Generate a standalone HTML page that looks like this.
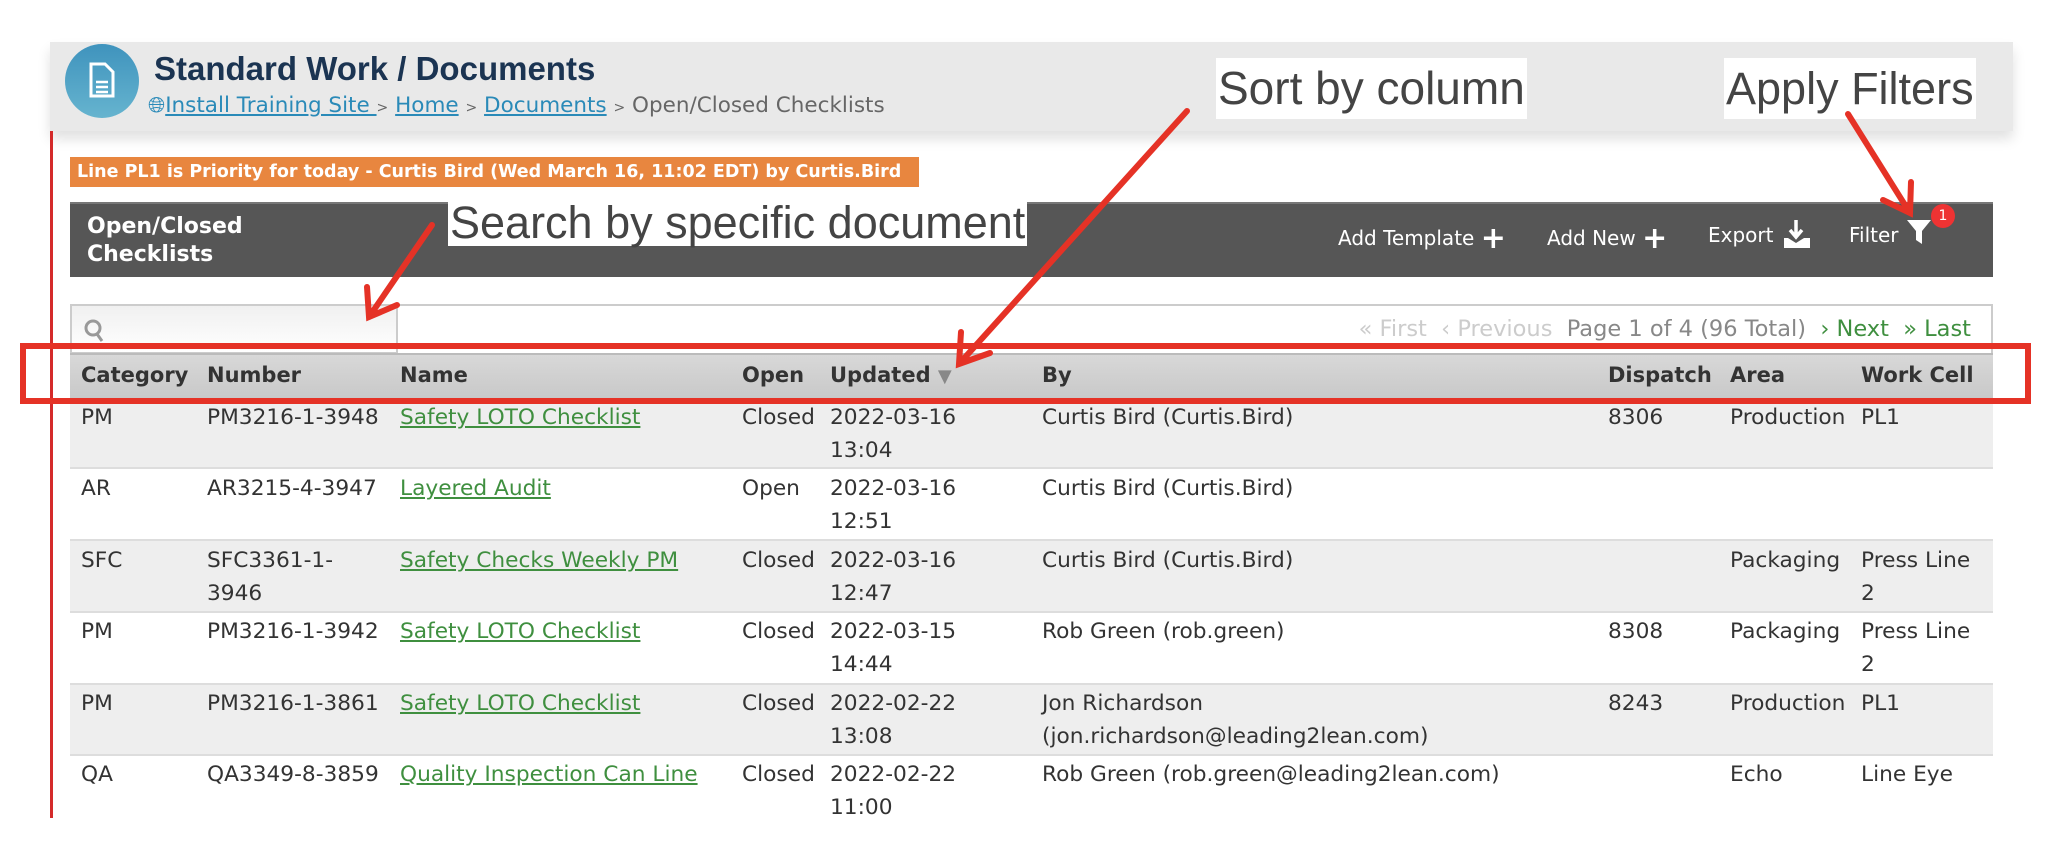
<!DOCTYPE html>
<html><head><meta charset="utf-8"><style>
*{margin:0;padding:0;box-sizing:border-box}
body{width:2052px;height:858px;background:#fff;position:relative;overflow:hidden;font-family:"DejaVu Sans","Liberation Sans",sans-serif;color:#333}
.a{position:absolute;white-space:nowrap}
.hdr{position:absolute;left:50px;top:42px;width:1963px;height:89px;background:#e9e9e9;box-shadow:0 8px 12px rgba(0,0,0,0.12)}
.row{position:absolute;left:70px;width:1923px;height:72px;border-top:2px solid #ddd}
.c{position:absolute;font-size:21.7px;line-height:33px;color:#333}
.lk{color:#3f8f3f;text-decoration:underline}
.th{position:absolute;font-size:21px;font-weight:bold;color:#333;top:363px}
.ann{position:absolute;background:#fff;color:#444;font-family:"Liberation Sans",sans-serif;font-size:46px;line-height:61px;padding:0 2px}
</style></head><body>
<div class="hdr"></div>
<div class="a" style="left:65px;top:44px;width:74px;height:74px;border-radius:50%;background:linear-gradient(#3f93bd,#66b4cf)"></div>
<svg class="a" style="left:88px;top:62px" width="28" height="36" viewBox="0 0 28 36"><path d="M3 2h14l8 8v24H3z" fill="none" stroke="#fff" stroke-width="3"/><path d="M8 20h12M8 25h12M8 30h12" stroke="#fff" stroke-width="2.5"/></svg>
<div class="a" style="left:154px;top:50px;font-size:33px;font-weight:bold;color:#1b3452;font-family:'Liberation Sans',sans-serif">Standard Work / Documents</div>
<div class="a" style="left:148px;top:93px;font-size:21.5px;color:#666">
<span style="color:#2a8ab8">&#x1F310;&#xFE0E;</span><span style="color:#2a8ab8;text-decoration:underline">Install Training Site </span> <small style="font-size:14px">&gt;</small> <span style="color:#2a8ab8;text-decoration:underline">Home</span> <small style="font-size:14px">&gt;</small> <span style="color:#2a8ab8;text-decoration:underline">Documents</span> <small style="font-size:14px">&gt;</small> Open/Closed Checklists</div>
<div class="a" style="left:50px;top:131px;width:3px;height:687px;background:#d42a2a"></div>
<div class="a" style="left:70px;top:157px;width:849px;height:30px;background:#e8863f;color:#fff;font-size:17.5px;font-weight:bold;line-height:30px;padding-left:7px">Line PL1 is Priority for today - Curtis Bird (Wed March 16, 11:02 EDT) by Curtis.Bird</div>
<div class="a" style="left:70px;top:202px;width:1923px;height:75px;background:#565656;border-top:2px solid #777"></div>
<div class="a" style="left:87px;top:213px;color:#fff;font-size:22px;font-weight:bold;line-height:28px">Open/Closed<br>Checklists</div>
<div class="a" style="left:1338px;top:221px;color:#fff;font-size:20px">Add Template <b style="font-size:30px;vertical-align:-3px">+</b></div>
<div class="a" style="left:1547px;top:221px;color:#fff;font-size:20px">Add New <b style="font-size:30px;vertical-align:-3px">+</b></div>
<div class="a" style="left:1708px;top:223px;color:#fff;font-size:20px">Export</div>
<svg class="a" style="left:1782px;top:218px" width="30" height="32" viewBox="0 0 30 32"><path d="M14 2v16M8 12l6 7 6-7" stroke="#fff" stroke-width="3.5" fill="none"/><path d="M2 20v10h26V20h-6l-8 5-8-5z" fill="#fff"/></svg>
<div class="a" style="left:1849px;top:223px;color:#fff;font-size:20px">Filter</div>
<svg class="a" style="left:1906px;top:218px" width="26" height="28" viewBox="0 0 26 28"><path d="M1 2h24l-9 11v13l-6-4v-9z" fill="#fff"/></svg>
<div class="a" style="left:1931px;top:204px;width:24px;height:24px;border-radius:50%;background:#e33;color:#fff;font-size:14px;text-align:center;line-height:24px">1</div>
<div class="a" style="left:70px;top:304px;width:1923px;height:514px;border:2px solid #ccc;border-bottom:none"></div>
<div class="a" style="left:70px;top:304px;width:328px;height:50px;background:linear-gradient(#f0f0f0,#fff);border:2px solid #ccc"></div>
<svg class="a" style="left:84px;top:318px" width="22" height="26" viewBox="0 0 22 26"><circle cx="9" cy="10" r="7" fill="none" stroke="#999" stroke-width="3"/><path d="M13 16l5 7" stroke="#999" stroke-width="3"/></svg>
<div class="a" style="right:81px;top:316px;font-size:22.5px;color:#ccc">« First &nbsp;‹ Previous &nbsp;<span style="color:#888">Page 1 of 4 (96 Total)</span> &nbsp;<span style="color:#3f8f3f">› Next &nbsp;» Last</span></div>
<div class="a" style="left:70px;top:353px;width:1923px;height:46px;background:linear-gradient(#d8d8d8,#c8c8c8);border-top:2px solid #bbb"></div>
<div class="th" style="left:81px">Category</div><div class="th" style="left:207px">Number</div><div class="th" style="left:400px">Name</div><div class="th" style="left:742px">Open</div><div class="th" style="left:830px">Updated <span style="color:#888;font-size:18px">▼</span></div><div class="th" style="left:1042px">By</div><div class="th" style="left:1608px">Dispatch</div><div class="th" style="left:1730px">Area</div><div class="th" style="left:1861px">Work Cell</div>

<div class="row" style="top:399px;background:#eee;border-top:none"></div>
<div class="row" style="top:467px;background:#fff"></div>
<div class="row" style="top:539px;background:#eee"></div>
<div class="row" style="top:611px;background:#fff"></div>
<div class="row" style="top:683px;background:#eee"></div>
<div class="row" style="top:754px;background:#fff;height:64px"></div>

<div class="c" style="left:81px;top:401px">PM</div><div class="c" style="left:207px;top:401px">PM3216-1-3948</div><div class="c lk" style="left:400px;top:401px">Safety LOTO Checklist</div><div class="c" style="left:742px;top:401px">Closed</div><div class="c" style="left:830px;top:401px">2022-03-16<br>13:04</div><div class="c" style="left:1042px;top:401px">Curtis Bird (Curtis.Bird)</div><div class="c" style="left:1608px;top:401px">8306</div><div class="c" style="left:1730px;top:401px">Production</div><div class="c" style="left:1861px;top:401px">PL1</div>

<div class="c" style="left:81px;top:472px">AR</div><div class="c" style="left:207px;top:472px">AR3215-4-3947</div><div class="c lk" style="left:400px;top:472px">Layered Audit</div><div class="c" style="left:742px;top:472px">Open</div><div class="c" style="left:830px;top:472px">2022-03-16<br>12:51</div><div class="c" style="left:1042px;top:472px">Curtis Bird (Curtis.Bird)</div>

<div class="c" style="left:81px;top:544px">SFC</div><div class="c" style="left:207px;top:544px">SFC3361-1-<br>3946</div><div class="c lk" style="left:400px;top:544px">Safety Checks Weekly PM</div><div class="c" style="left:742px;top:544px">Closed</div><div class="c" style="left:830px;top:544px">2022-03-16<br>12:47</div><div class="c" style="left:1042px;top:544px">Curtis Bird (Curtis.Bird)</div><div class="c" style="left:1730px;top:544px">Packaging</div><div class="c" style="left:1861px;top:544px">Press Line<br>2</div>

<div class="c" style="left:81px;top:615px">PM</div><div class="c" style="left:207px;top:615px">PM3216-1-3942</div><div class="c lk" style="left:400px;top:615px">Safety LOTO Checklist</div><div class="c" style="left:742px;top:615px">Closed</div><div class="c" style="left:830px;top:615px">2022-03-15<br>14:44</div><div class="c" style="left:1042px;top:615px">Rob Green (rob.green)</div><div class="c" style="left:1608px;top:615px">8308</div><div class="c" style="left:1730px;top:615px">Packaging</div><div class="c" style="left:1861px;top:615px">Press Line<br>2</div>

<div class="c" style="left:81px;top:687px">PM</div><div class="c" style="left:207px;top:687px">PM3216-1-3861</div><div class="c lk" style="left:400px;top:687px">Safety LOTO Checklist</div><div class="c" style="left:742px;top:687px">Closed</div><div class="c" style="left:830px;top:687px">2022-02-22<br>13:08</div><div class="c" style="left:1042px;top:687px">Jon Richardson<br>(jon.richardson@leading2lean.com)</div><div class="c" style="left:1608px;top:687px">8243</div><div class="c" style="left:1730px;top:687px">Production</div><div class="c" style="left:1861px;top:687px">PL1</div>

<div class="c" style="left:81px;top:758px">QA</div><div class="c" style="left:207px;top:758px">QA3349-8-3859</div><div class="c lk" style="left:400px;top:758px">Quality Inspection Can Line</div><div class="c" style="left:742px;top:758px">Closed</div><div class="c" style="left:830px;top:758px">2022-02-22<br>11:00</div><div class="c" style="left:1042px;top:758px">Rob Green (rob.green@leading2lean.com)</div><div class="c" style="left:1730px;top:758px">Echo</div><div class="c" style="left:1861px;top:758px">Line Eye</div>

<div class="a" style="left:20px;top:343px;width:2011px;height:61px;border:6px solid #e53226"></div>
<div class="ann" style="left:448px;top:199px;height:47px;line-height:47px;font-size:45px">Search by specific document</div>
<div class="ann" style="left:1216px;top:58px">Sort by column</div>
<div class="ann" style="left:1724px;top:58px;font-size:45px">Apply Filters</div>
<svg class="a" style="left:0;top:0" width="2052" height="858">
<g stroke="#e53226" stroke-width="6" fill="none" stroke-linecap="round">
<path d="M432 225L369 317M367 287L369 317L397 305"/>
<path d="M1187 111L959 364M961 332L959 364L990 353"/>
<path d="M1848 114L1910 213M1911 182L1910 213L1883 200"/>
</g></svg>
</body></html>
